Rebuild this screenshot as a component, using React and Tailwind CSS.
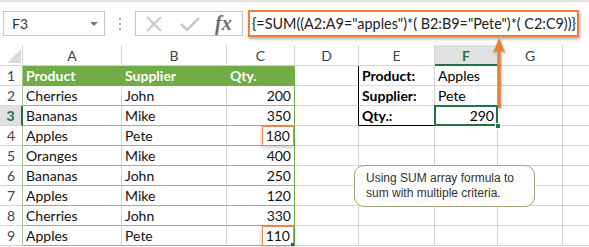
import React from "react";

const cols = ["", "A", "B", "C", "D", "E", "F", "G", ""];

const table = [
  ["Product", "Supplier", "Qty."],
  ["Cherries", "John", "200"],
  ["Bananas", "Mike", "350"],
  ["Apples", "Pete", "180"],
  ["Oranges", "Mike", "400"],
  ["Bananas", "John", "250"],
  ["Apples", "Mike", "120"],
  ["Cherries", "John", "330"],
  ["Apples", "Pete", "110"],
];

const summary = {
  1: ["Product:", "Apples"],
  2: ["Supplier:", "Pete"],
  3: ["Qty.:", "290"],
};

// rows whose Qty. is highlighted in orange
const marked = [4, 9];

const FormulaBar = () => (
  <div className="flex items-start h-[45px] pt-[9px] pl-[3px] border-t-2 border-[#e3e3e3]">
    {/* Name box */}
    <div className="w-[102px] h-[25px] border border-[#c6c6c6] flex items-center justify-between pl-[8px] pr-[6px] text-[14px] text-[#333]">
      <span>F3</span>
      <span className="w-0 h-0 border-l-[4px] border-r-[4px] border-t-[4px] border-l-transparent border-r-transparent border-t-[#777]" />
    </div>
    {/* grip dots */}
    <div className="w-[30px] h-[25px] flex flex-col items-center justify-center gap-[3px]">
      <span className="w-[2px] h-[2px] bg-[#aaa]" />
      <span className="w-[2px] h-[2px] bg-[#aaa]" />
      <span className="w-[2px] h-[2px] bg-[#aaa]" />
    </div>
    {/* cancel / enter / fx */}
    <div className="w-[108px] h-[25px] border border-[#c6c6c6] flex items-center pl-[9px]">
      <svg width="18" height="16" viewBox="0 0 18 16" className="shrink-0">
        <path d="M2 1 L16 15 M16 1 L2 15" stroke="#c8c8c8" strokeWidth="2" fill="none" />
      </svg>
      <svg width="22" height="16" viewBox="0 0 22 16" className="ml-[16px] shrink-0">
        <path d="M2 8 L8 14 L20 2" stroke="#c8c8c8" strokeWidth="2.5" fill="none" />
      </svg>
      <span className="ml-[14px] font-['Liberation_Serif',serif] italic font-bold text-[20px] leading-none text-[#6e6e6e] -mt-[2px]">
        fx
      </span>
    </div>
    {/* formula input */}
    <div className="ml-[5px] -mt-[1px] w-[331px] h-[27px] border-2 border-[#f07e3a] shadow-[1px_2px_3px_rgba(0,0,0,0.35)] flex items-center pl-[2px] text-[14.4px] text-[#222] whitespace-nowrap">
      {'{=SUM((A2:A9="apples")*( B2:B9="Pete")*( C2:C9))}'}
    </div>
  </div>
);

const Sheet = () => {
  const cells = [];

  // column header row
  cols.forEach((c, i) => {
    cells.push(
      <div
        key={"h" + i}
        className={
          "h-[21px] leading-[21px] text-center text-[14px] border-r border-b border-[#d4d4d4] " +
          (c === "F" ? "bg-[#e1e1e1] text-[#217346] font-bold border-b-2 border-b-[#217346]" : "text-[#444]")
        }
      >
        {c}
      </div>
    );
  });

  for (let r = 1; r <= 9; r++) {
    const rowSel = r === 3;
    cells.push(
      <div
        key={"r" + r}
        className={
          "h-[20px] leading-[20px] text-center text-[14px] border-b border-b-[#d4d4d4] " +
          (rowSel
            ? "bg-[#e1e1e1] text-[#217346] font-bold border-r-2 border-r-[#217346]"
            : "text-[#444] border-r border-r-[#a9c79a]")
        }
      >
        {r}
      </div>
    );

    // A..C table
    table[r - 1].forEach((v, ci) => {
      const head = r === 1;
      const num = ci === 2;
      let cls = "h-[20px] leading-[20px] text-[14px] px-[3px] whitespace-nowrap border-r border-b ";
      if (head) {
        cls += "bg-[#70ad47] text-white font-bold border-[#70ad47]";
      } else {
        cls += "text-[#111] border-b-[#8cbc6c] " + (num ? "text-right border-r-[#70ad47]" : "border-r-[#d4d4d4]");
      }
      if (!head && num && marked.includes(r)) {
        cells.push(
          <div key={r + "-" + ci} className={cls + " flex justify-end pr-0"}>
            <span className="h-[20px] leading-[18px] border-[1.5px] border-[#f0874a] px-[3px] shadow-[0_1px_4px_rgba(0,0,0,0.25)] relative">
              {v}
              {r === 9 && <span className="absolute right-[-1px] bottom-[-1px] w-[3px] h-[3px] bg-[#2a4d8f]" />}
            </span>
          </div>
        );
      } else {
        cells.push(
          <div key={r + "-" + ci} className={cls}>
            {v}
          </div>
        );
      }
    });

    // D
    cells.push(
      <div
        key={r + "-D"}
        className={
          "h-[20px] border-b border-b-[#d4d4d4] border-r " +
          (summary[r] ? "border-r-black" : "border-r-[#d4d4d4]")
        }
      />
    );

    // E, F
    if (summary[r]) {
      const [label, val] = summary[r];
      cells.push(
        <div
          key={r + "-E"}
          className={
            "h-[20px] leading-[20px] text-[14px] px-[3px] font-bold text-black border-r border-r-[#d4d4d4] border-b " +
            (r === 3 ? "border-b-black" : "border-b-[#d4d4d4]")
          }
        >
          {label}
        </div>
      );
      cells.push(
        <div
          key={r + "-F"}
          className={
            "relative h-[20px] leading-[20px] text-[14px] px-[3px] text-black border-r border-r-[#d4d4d4] border-b " +
            (r === 3 ? "border-b-black text-right" : "border-b-[#d4d4d4]")
          }
        >
          {val}
          {r === 3 && (
            <>
              <span className="absolute -left-[1px] -top-[1px] -right-[1px] -bottom-[1px] border-2 border-[#217346]" />
              <span className="absolute -right-[4px] -bottom-[4px] w-[6px] h-[6px] bg-[#217346] border border-white" />
            </>
          )}
        </div>
      );
    } else {
      cells.push(<div key={r + "-E"} className="h-[20px] border-r border-b border-[#d4d4d4]" />);
      cells.push(<div key={r + "-F"} className="h-[20px] border-r border-b border-[#d4d4d4]" />);
    }

    // G, H
    cells.push(<div key={r + "-G"} className="h-[20px] border-r border-b border-[#d4d4d4]" />);
    cells.push(<div key={r + "-H"} className="h-[20px] border-r border-b border-[#d4d4d4]" />);
  }

  return (
    <div className="relative grid grid-cols-[23px_99px_105px_68px_64px_76px_63px_65px_40px] grid-rows-[21px_repeat(9,20px)]">
      {cells}
      {/* select-all corner */}
      <svg width="16" height="16" viewBox="0 0 16 16" className="absolute left-[6px] top-[3px]">
        <path d="M15 1 L15 15 L1 15 Z" fill="#dadada" />
      </svg>
    </div>
  );
};

export default function App() {
  return (
    <div className="relative w-[589px] h-[247px] overflow-hidden bg-white font-['Lato',sans-serif]">
      <FormulaBar />
      <Sheet />

      {/* orange pointer arrow */}
      <svg
        width="20"
        height="74"
        viewBox="0 0 20 74"
        className="absolute left-[489px] top-[36px] drop-shadow-[1px_1px_1px_rgba(0,0,0,0.35)]"
      >
        <line x1="10" y1="10" x2="10" y2="72" stroke="#ed7d31" strokeWidth="3" />
        <path d="M10 2 L16 17 L10 13 L4 17 Z" fill="#ed7d31" />
      </svg>

      {/* callout */}
      <div className="absolute left-[354px] top-[165px] w-[181px] h-[42px] rounded-[10px] border-[1.5px] border-[#a2a27a] bg-[#fdfdfb] pl-[11px] pt-[5px] font-['Liberation_Sans',Arial,sans-serif] text-[12px] leading-[15px] text-[#333]">
        Using SUM array formula to
        <br />
        sum with multiple criteria.
      </div>
    </div>
  );
}
